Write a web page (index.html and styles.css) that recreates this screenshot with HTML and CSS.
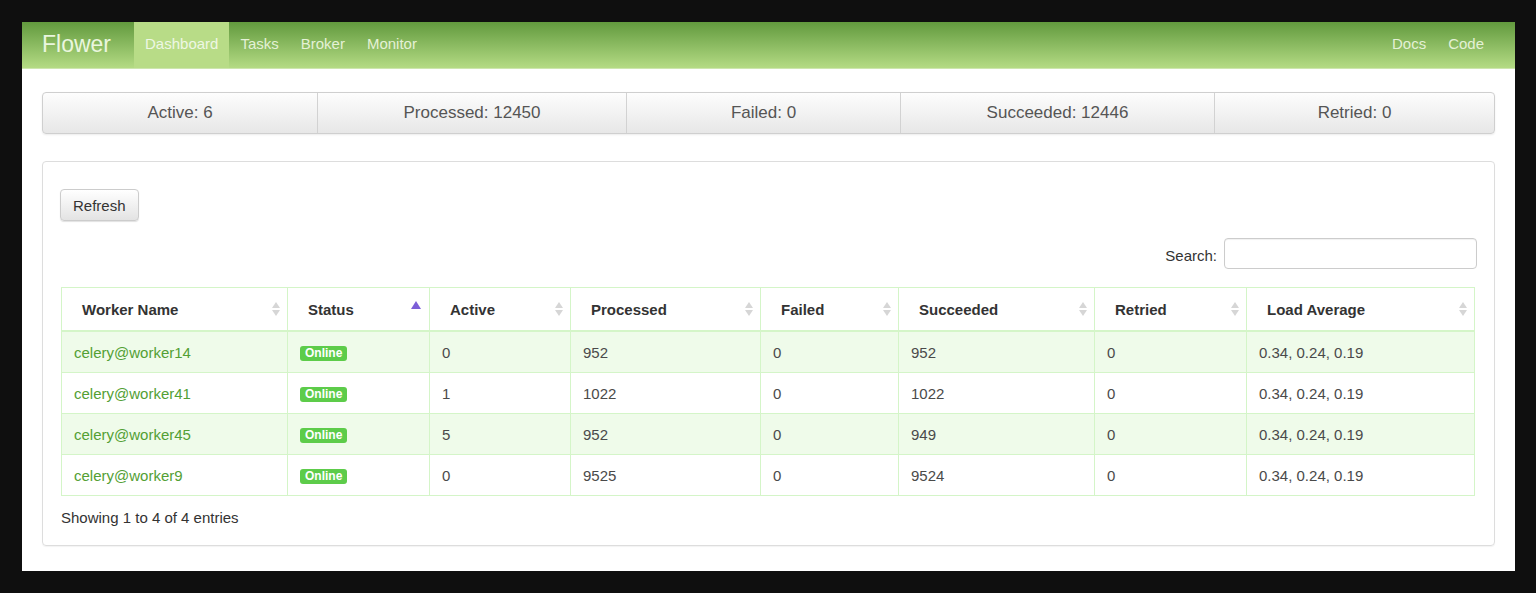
FILE: index.html
```html
<!DOCTYPE html>
<html lang="en">
<head>
  <meta charset="UTF-8">
  <title>Flower</title>
  <link rel="stylesheet" href="styles.css">
</head>
<body>
  <div class="page">

    <div class="navbar">
      <div class="container nav-inner">
        <a class="brand" href="#">Flower</a>
        <ul class="nav">
          <li class="active"><a href="#">Dashboard</a></li>
          <li><a href="#">Tasks</a></li>
          <li><a href="#">Broker</a></li>
          <li><a href="#">Monitor</a></li>
        </ul>
        <ul class="nav nav-right">
          <li><a href="#">Docs</a></li>
          <li><a href="#">Code</a></li>
        </ul>
      </div>
    </div>

    <div class="container">
      <div class="stats">
        <div class="stat s1">Active: 6</div>
        <div class="stat s2">Processed: 12450</div>
        <div class="stat s3">Failed: 0</div>
        <div class="stat s4">Succeeded: 12446</div>
        <div class="stat s5">Retried: 0</div>
      </div>

      <div class="panel">
        <button class="btn">Refresh</button>

        <div class="search-row">
          <label>Search:</label>
          <input type="text" class="search">
        </div>

        <table class="workers">
          <colgroup>
            <col style="width:226px"><col style="width:142px"><col style="width:141px"><col style="width:190px">
            <col style="width:138px"><col style="width:196px"><col style="width:152px"><col style="width:228px">
          </colgroup>
          <thead>
            <tr>
              <th class="sort">Worker Name</th>
              <th class="sort-asc">Status</th>
              <th class="sort">Active</th>
              <th class="sort">Processed</th>
              <th class="sort">Failed</th>
              <th class="sort">Succeeded</th>
              <th class="sort">Retried</th>
              <th class="sort">Load Average</th>
            </tr>
          </thead>
          <tbody>
            <tr class="odd">
              <td><a href="#">celery@worker14</a></td>
              <td><span class="badge">Online</span></td>
              <td>0</td><td>952</td><td>0</td><td>952</td><td>0</td><td>0.34, 0.24, 0.19</td>
            </tr>
            <tr>
              <td><a href="#">celery@worker41</a></td>
              <td><span class="badge">Online</span></td>
              <td>1</td><td>1022</td><td>0</td><td>1022</td><td>0</td><td>0.34, 0.24, 0.19</td>
            </tr>
            <tr class="odd">
              <td><a href="#">celery@worker45</a></td>
              <td><span class="badge">Online</span></td>
              <td>5</td><td>952</td><td>0</td><td>949</td><td>0</td><td>0.34, 0.24, 0.19</td>
            </tr>
            <tr>
              <td><a href="#">celery@worker9</a></td>
              <td><span class="badge">Online</span></td>
              <td>0</td><td>9525</td><td>0</td><td>9524</td><td>0</td><td>0.34, 0.24, 0.19</td>
            </tr>
          </tbody>
        </table>

        <div class="info">Showing 1 to 4 of 4 entries</div>
      </div>
    </div>

  </div>
</body>
</html>
```

FILE: styles.css
```css
body {
  margin: 0;
  padding: 22px 21px 22px 22px;
  background: #0f0f0f;
  font-family: 'Liberation Sans', Arial, sans-serif;
  font-size: 15px;
  color: #333;
}
.page {
  background: #fff;
  height: 549px;
  overflow: hidden;
}
.container {
  padding: 0 20px;
}

/* navbar */
.navbar {
  height: 46px;
  background: linear-gradient(to bottom, #629a3e, #b4db84);
  border-bottom: 1px solid #cde6ae;
}
.nav-inner {
  display: flex;
  align-items: stretch;
  height: 46px;
}
.brand {
  font-size: 23px;
  color: #eaf6de;
  text-decoration: none;
  line-height: 44px;
  margin-right: 23px;
}
.nav {
  display: flex;
  list-style: none;
  margin: 0;
  padding: 0;
}
.nav li a {
  display: block;
  padding: 0 11px;
  line-height: 44px;
  color: #e4f1d6;
  text-decoration: none;
}
.nav li.active a {
  background: #b8dc87;
  color: #eef7e4;
  height: 46px;
}
.nav-right {
  margin-left: auto;
}

/* stats */
.stats {
  display: flex;
  margin-top: 23px;
  height: 40px;
  border: 1px solid #cfcfcf;
  border-radius: 4px;
  background: linear-gradient(to bottom, #fdfdfd, #e7e7e7);
  box-shadow: 0 1px 2px rgba(0,0,0,0.08);
}
.stat {
  border-left: 1px solid #d2d2d2;
  text-align: center;
  line-height: 40px;
  font-size: 17px;
  color: #555;
}
.stat:first-child { border-left: 0; }
.s1 { width: 274px; }
.s2 { width: 308px; }
.s3 { width: 273px; }
.s4 { width: 313px; }
.s5 { flex: 1; }

/* panel */
.panel {
  margin-top: 27px;
  border: 1px solid #ddd;
  border-radius: 4px;
  padding: 27px 19px 17px 18px;
  box-shadow: 0 1px 1px rgba(0,0,0,0.05);
}
.btn {
  font-family: inherit;
  font-size: 15px;
  color: #333;
  height: 32px;
  padding: 0 12px;
  margin-left: -1px;
  border: 1px solid #ccc;
  border-radius: 4px;
  background: linear-gradient(to bottom, #fff, #e3e3e3);
  box-shadow: 0 1px 1px rgba(0,0,0,0.12);
}
.search-row {
  display: flex;
  justify-content: flex-end;
  align-items: center;
  margin-top: 17px;
  margin-right: -2px;
}
.search-row label {
  margin-right: 7px;
  padding-top: 4px;
}
.search {
  width: 251px;
  height: 29px;
  border: 1px solid #ccc;
  border-radius: 4px;
  padding: 0;
  box-shadow: inset 0 1px 1px rgba(0,0,0,0.06);
}

/* table */
.workers {
  margin-top: 18px;
  border-collapse: collapse;
  table-layout: fixed;
  width: 1413px;
  border: 1px solid #d4f5c8;
}
.workers th {
  position: relative;
  text-align: left;
  font-weight: bold;
  height: 42px;
  padding: 0 20px;
  border: 1px solid #d4f5c8;
  border-bottom: 2px solid #d4f5c8;
}
.workers td {
  height: 39px;
  padding: 1px 12px 0;
  border: 1px solid #d4f5c8;
  color: #4a4a4a;
}
.workers tr.odd td {
  background: #effbea;
}
.workers a {
  color: #53a034;
  text-decoration: none;
}
.badge {
  display: inline-block;
  background: #5dcc4a;
  color: #fff;
  font-size: 12px;
  font-weight: bold;
  line-height: 15px;
  padding: 0 5px;
  border-radius: 3px;
  vertical-align: 1px;
}

/* sort arrows */
.sort::before,
.sort::after {
  content: "";
  position: absolute;
  right: 7px;
  border-left: 4px solid transparent;
  border-right: 4px solid transparent;
}
.sort::before {
  top: 14px;
  border-bottom: 6px solid #d6d6d6;
}
.sort::after {
  top: 22px;
  border-top: 6px solid #d6d6d6;
}
.sort-asc::after {
  content: "";
  position: absolute;
  right: 8px;
  top: 13px;
  border-left: 5px solid transparent;
  border-right: 5px solid transparent;
  border-bottom: 8px solid #7d5fd8;
}

.info {
  margin-top: 12px;
  line-height: 20px;
}
```
